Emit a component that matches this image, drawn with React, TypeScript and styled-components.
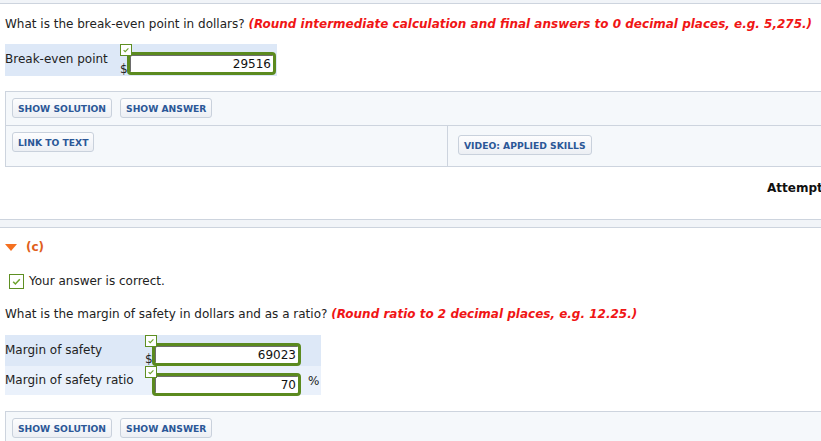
import { createGlobalStyle, styled } from "styled-components";

const GlobalStyle = createGlobalStyle`
  html, body {
    margin: 0;
    padding: 0;
    background: #fff;
  }
  body {
    font-family: "DejaVu Sans", Verdana, sans-serif;
    font-size: 12px;
    color: #222;
    overflow: hidden;
  }
`;

const Page = styled.div`
  width: 821px;
  height: 441px;
  overflow: hidden;
`;

const Band = styled.div<{ $h: number }>`
  height: ${(p) => p.$h}px;
  background: #f1f4f8;
  border-bottom: 1px solid #cdd4de;
  border-top: ${(p) => (p.$h > 4 ? "1px solid #cdd4de" : "none")};
`;

const Question = styled.p`
  margin: 0;
  padding: 0 5px;
  line-height: 16px;
  white-space: nowrap;
`;

const Hint = styled.em`
  color: #f01515;
  font-weight: bold;
`;

const AnswerTable = styled.div<{ $labelW: number }>`
  display: inline-grid;
  grid-template-columns: ${(p) => p.$labelW}px auto;
  margin-left: 5px;
`;

const Row = styled.div<{ $alt?: boolean; $h: number }>`
  display: contents;
  & > * {
    background: ${(p) => (p.$alt ? "#eaf1fb" : "#dde8f7")};
    height: ${(p) => p.$h}px;
  }
`;

const Label = styled.div`
  display: flex;
  align-items: center;
  padding-bottom: 2px;
  box-sizing: border-box;
  white-space: nowrap;
`;

const InputCell = styled.div<{ $pr: number }>`
  position: relative;
  display: flex;
  align-items: flex-end;
  padding-right: ${(p) => p.$pr}px;
  box-sizing: border-box;
`;

const Unit = styled.span<{ $after?: boolean }>`
  display: inline-block;
  flex: none;
  width: ${(p) => (p.$after ? "auto" : "7px")};
  margin-left: ${(p) => (p.$after ? "7px" : "0")};
  align-self: ${(p) => (p.$after ? "center" : "flex-end")};
  line-height: 14px;
`;

const Field = styled.div<{ $w: number; $shift?: number }>`
  width: ${(p) => p.$w}px;
  flex: none;
  height: 23px;
  margin-bottom: ${(p) => p.$shift ?? 0}px;
  box-sizing: border-box;
  border: 3px solid #5b8a1f;
  border-radius: 4px;
  box-shadow: inset 1px 1px 0 #6d6d6d;
  background: #fff;
  display: flex;
  align-items: center;
  justify-content: flex-end;
  padding-right: 2px;
  font-size: 12px;
  color: #111;
`;

const Check = styled.span<{ $size: number }>`
  display: inline-flex;
  align-items: center;
  justify-content: center;
  width: ${(p) => p.$size}px;
  height: ${(p) => p.$size}px;
  box-sizing: border-box;
  border: 1px solid #5e8f22;
  background: #fff;
`;

const Badge = styled(Check)`
  position: absolute;
  left: 0;
  top: 0;
`;

const Panel = styled.div`
  margin-left: 5px;
  width: 830px;
  border: 1px solid #cdd4de;
  border-right: none;
  background: #f5f8fb;
`;

const PanelRow = styled.div<{ $h: number; $top?: boolean }>`
  display: flex;
  height: ${(p) => p.$h}px;
  box-sizing: border-box;
  border-top: ${(p) => (p.$top ? "1px solid #cdd4de" : "none")};
`;

const PanelCell = styled.div<{ $w?: number; $pt: number; $divider?: boolean }>`
  display: flex;
  gap: 8px;
  align-items: flex-start;
  padding: ${(p) => p.$pt}px 6px 0 6px;
  width: ${(p) => (p.$w ? `${p.$w}px` : "auto")};
  flex: ${(p) => (p.$w ? "none" : "1")};
  box-sizing: border-box;
  border-left: ${(p) => (p.$divider ? "1px solid #cdd4de" : "none")};
  padding-left: ${(p) => (p.$divider ? "10px" : "6px")};
`;

const Button = styled.button`
  height: 20px;
  padding: 0 5px;
  border: 1px solid #c9d1dc;
  border-radius: 3px;
  background: linear-gradient(#fdfdfe, #eceff4);
  font-family: "DejaVu Sans", Verdana, sans-serif;
  font-size: 9.2px;
  font-weight: bold;
  color: #2b5797;
  cursor: pointer;
  white-space: nowrap;
`;

const Attempts = styled.div`
  height: 52px;
  box-sizing: border-box;
  padding: 13px 0 0 767px;
  white-space: nowrap;
  font-weight: bold;
  color: #111;
  font-size: 12px;
  line-height: 16px;
  overflow: hidden;
`;

const PartHead = styled.div`
  display: flex;
  align-items: center;
  gap: 9px;
  padding-left: 5px;
  color: #e0601c;
  font-weight: bold;
  height: 16px;
`;

const Triangle = styled.span`
  width: 0;
  height: 0;
  border-left: 6px solid transparent;
  border-right: 6px solid transparent;
  border-top: 7px solid #f5701f;
`;

const Notice = styled.div`
  display: flex;
  align-items: center;
  gap: 5px;
  padding-left: 9px;
  height: 16px;
`;

const Gap = styled.div<{ $h: number }>`
  height: ${(p) => p.$h}px;
`;

function Tick({ size }: { size: number }) {
  return (
    <svg width={size} height={size} viewBox="0 0 10 10">
      <path d="M2 5.2 L4 7.2 L8 3" fill="none" stroke="#6da32c" strokeWidth="1.4" />
    </svg>
  );
}

export default function App() {
  return (
    <Page>
      <GlobalStyle />
      <Band $h={3} />
      <Gap $h={12} />
      <Question>
        What is the break-even point in dollars?{" "}
        <Hint>(Round intermediate calculation and final answers to 0 decimal places, e.g. 5,275.)</Hint>
      </Question>
      <Gap $h={12} />
      <AnswerTable $labelW={115}>
        <Row $h={32}>
          <Label>Break-even point</Label>
          <InputCell $pr={1}>
            <Badge $size={12}>
              <Tick size={8} />
            </Badge>
            <Unit>$</Unit>
            <Field $w={149} $shift={1}>29516</Field>
          </InputCell>
        </Row>
      </AnswerTable>
      <Gap $h={15} />
      <Panel>
        <PanelRow $h={33}>
          <PanelCell $pt={6}>
            <Button>SHOW SOLUTION</Button>
            <Button>SHOW ANSWER</Button>
          </PanelCell>
        </PanelRow>
        <PanelRow $h={41} $top>
          <PanelCell $w={441} $pt={6}>
            <Button>LINK TO TEXT</Button>
          </PanelCell>
          <PanelCell $pt={9} $divider>
            <Button>VIDEO: APPLIED SKILLS</Button>
          </PanelCell>
        </PanelRow>
      </Panel>
      <Attempts>Attempts: 1 of 3 used</Attempts>
      <Band $h={7} />
      <Gap $h={11} />
      <PartHead>
        <Triangle />
        <span>(c)</span>
      </PartHead>
      <Gap $h={18} />
      <Notice>
        <Check $size={15}>
          <Tick size={11} />
        </Check>
        <span>Your answer is correct.</span>
      </Notice>
      <Gap $h={17} />
      <Question>
        What is the margin of safety in dollars and as a ratio?{" "}
        <Hint>(Round ratio to 2 decimal places, e.g. 12.25.)</Hint>
      </Question>
      <Gap $h={13} />
      <AnswerTable $labelW={140}>
        <Row $h={31}>
          <Label>Margin of safety</Label>
          <InputCell $pr={2}>
            <Badge $size={12}>
              <Tick size={8} />
            </Badge>
            <Unit>$</Unit>
            <Field $w={149}>69023</Field>
          </InputCell>
        </Row>
        <Row $h={29} $alt>
          <Label>Margin of safety ratio</Label>
          <InputCell $pr={2}>
            <Badge $size={12}>
              <Tick size={8} />
            </Badge>
            <Unit />
            <Field $w={149} $shift={-1}>70</Field>
            <Unit $after>%</Unit>
          </InputCell>
        </Row>
      </AnswerTable>
      <Gap $h={16} />
      <Panel>
        <PanelRow $h={33}>
          <PanelCell $pt={6}>
            <Button>SHOW SOLUTION</Button>
            <Button>SHOW ANSWER</Button>
          </PanelCell>
        </PanelRow>
      </Panel>
    </Page>
  );
}
